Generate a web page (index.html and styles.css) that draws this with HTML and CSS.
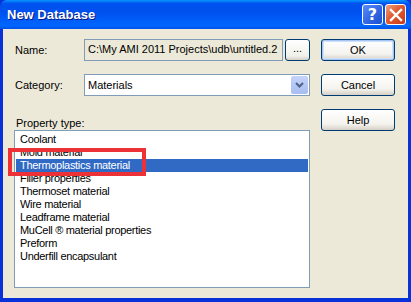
FILE: index.html
```html
<!DOCTYPE html>
<html lang="en">
<head>
  <meta charset="UTF-8">
  <title>New Database</title>
  <link rel="stylesheet" href="styles.css">
</head>
<body>
  <div class="window">
    <div class="titlebar">
      <span class="title">New Database</span>
      <div class="caption-buttons">
        <div class="cap help-cap">?</div>
        <div class="cap close-cap">
          <svg width="14" height="14" viewBox="0 0 14 14">
            <path d="M2 2 L12 12 M12 2 L2 12" stroke="#fff" stroke-width="2.4" stroke-linecap="square"/>
          </svg>
        </div>
      </div>
    </div>

    <div class="client">
      <div class="form">
        <div class="row">
          <span class="label">Name:</span>
          <div class="textbox readonly">C:\My AMI 2011 Projects\udb\untitled.2</div>
          <button class="browse">...</button>
        </div>

        <div class="row">
          <span class="label">Category:</span>
          <div class="combo">
            <span class="combo-text">Materials</span>
            <span class="combo-arrow">
              <svg width="9" height="6" viewBox="0 0 9 6">
                <path d="M1 1 L4.5 4.5 L8 1" fill="none" stroke="#4d6185" stroke-width="2"/>
              </svg>
            </span>
          </div>
        </div>

        <div class="list-label">Property type:</div>
        <div class="listbox">
          <div class="item">Coolant</div>
          <div class="item">Mold material</div>
          <div class="item selected">Thermoplastics material</div>
          <div class="item">Filler properties</div>
          <div class="item">Thermoset material</div>
          <div class="item">Wire material</div>
          <div class="item">Leadframe material</div>
          <div class="item">MuCell &reg; material properties</div>
          <div class="item">Preform</div>
          <div class="item">Underfill encapsulant</div>
          <div class="highlight"></div>
        </div>
      </div>

      <div class="buttons">
        <button class="btn default">OK</button>
        <button class="btn">Cancel</button>
        <button class="btn">Help</button>
      </div>
    </div>
  </div>
</body>
</html>
```

FILE: styles.css
```css
* {
  box-sizing: border-box;
}

html, body {
  margin: 0;
  padding: 0;
}

body {
  width: 411px;
  height: 302px;
  overflow: hidden;
  font-family: 'Liberation Sans', Arial, sans-serif;
  font-size: 11px;
  color: #000;
}

.window {
  width: 411px;
  height: 302px;
  display: flex;
  flex-direction: column;
  background: #0831d9;
}

.titlebar {
  height: 29px;
  display: flex;
  align-items: center;
  justify-content: space-between;
  padding: 0 5px 0 7px;
  border-radius: 7px 7px 0 0;
  background: linear-gradient(#0997ff 0%, #0053ee 12%, #0050ee 40%, #0066ff 88%, #0053e8 100%);
}

.title {
  font-family: 'Liberation Sans', Arial, sans-serif;
  font-weight: bold;
  font-size: 13px;
  color: #fff;
  text-shadow: 1px 1px 0 #0a1883;
}

.caption-buttons {
  display: flex;
  gap: 2px;
}

.cap {
  width: 21px;
  height: 21px;
  border: 1px solid #fff;
  border-radius: 3px;
  display: flex;
  align-items: center;
  justify-content: center;
  color: #fff;
}

.help-cap {
  background: linear-gradient(135deg, #5a8cf8, #2f63e0 60%, #1d4fd0);
  font-family: 'DejaVu Sans', sans-serif;
  font-weight: bold;
  font-size: 16px;
}

.close-cap {
  background: linear-gradient(135deg, #f0a080, #e05a30 45%, #c83818);
}

.client {
  flex: 1;
  margin: 0 3px 4px 3px;
  background: #ece9d8;
  display: flex;
  padding: 10px 0 0 11px;
}

.form {
  width: 296px;
  display: flex;
  flex-direction: column;
}

.row {
  display: flex;
  align-items: center;
  height: 22px;
  margin-bottom: 13px;
}

.label {
  width: 70px;
  padding-left: 1px;
}

.textbox {
  width: 199px;
  height: 22px;
  border: 1px solid #7f9db9;
  padding: 3px 0 0 3px;
  white-space: nowrap;
  overflow: hidden;
}

.readonly {
  background: #ece9d8;
}

.browse {
  width: 25px;
  height: 22px;
  margin-left: 2px;
  padding: 0 0 4px 0;
  font-family: inherit;
  font-size: 11px;
  border: 1px solid #003c74;
  border-radius: 3px;
  background: linear-gradient(#ffffff, #f0f0ea 80%, #d6d0c5);
}

.combo {
  width: 226px;
  height: 22px;
  border: 1px solid #7f9db9;
  background: #fff;
  display: flex;
  align-items: center;
  justify-content: space-between;
  padding: 0 1px 0 3px;
}

.combo-arrow {
  width: 17px;
  height: 18px;
  border-radius: 2px;
  background: linear-gradient(#c6d3f7, #b4c8f6 50%, #a8bdf0);
  display: flex;
  align-items: center;
  justify-content: center;
}

.list-label {
  margin-top: 8px;
  height: 13px;
  line-height: 13px;
  padding-left: 2px;
}

.listbox {
  position: relative;
  width: 296px;
  height: 158px;
  border: 1px solid #7f9db9;
  background: #fff;
  padding: 2px 1px;
}

.item {
  height: 13px;
  line-height: 13px;
  padding-left: 4px;
  white-space: nowrap;
  letter-spacing: -0.3px;
}

.selected {
  background: #316ac5;
  color: #fff;
}

.highlight {
  position: absolute;
  left: -7px;
  top: 17px;
  width: 138px;
  height: 28px;
  border: 4px solid #ec3236;
}

.buttons {
  margin-left: 11px;
  display: flex;
  flex-direction: column;
  gap: 13px;
}

.btn {
  width: 74px;
  height: 22px;
  font-family: inherit;
  font-size: 11px;
  border: 1px solid #003c74;
  border-radius: 3px;
  background: linear-gradient(#ffffff, #f4f3ee 70%, #d6d0c5);
  padding: 0;
}

.default {
  box-shadow: inset 0 0 0 1px #a6c5f5, inset 0 0 0 2px #cfe0fb;
}
```
